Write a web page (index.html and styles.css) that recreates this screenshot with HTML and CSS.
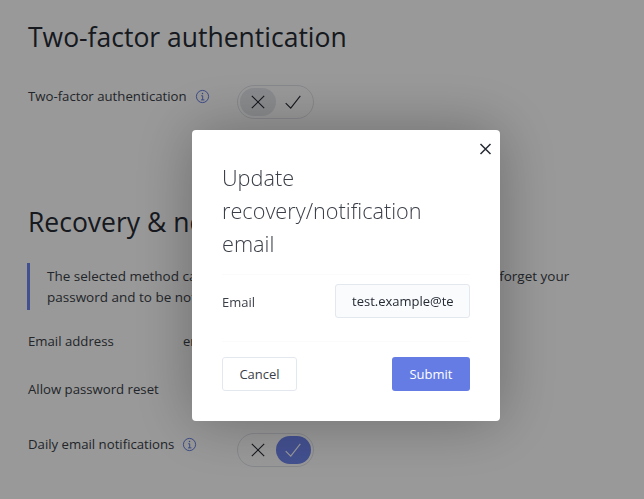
FILE: index.html
```html
<!DOCTYPE html>
<html lang="en">
<head>
  <meta charset="UTF-8" />
  <title>Account settings</title>
  <link rel="stylesheet" href="styles.css">
</head>
<body>
  <div class="page">
    <h2 class="first">Two-factor authentication</h2>
    <div class="row row-2fa">
      <div class="label">Two-factor authentication
        <svg class="info" viewBox="0 0 16 16"><circle cx="8" cy="8" r="6.5"/><path d="M6.6 7.2H8.2V11.6M6.4 11.6H10"/><circle class="dot" cx="8" cy="4.9" r="0.8"/></svg>
      </div>
      <div class="toggle">
        <span class="opt off-on"><svg viewBox="0 0 16 16"><path d="M2.5 2.5L13.5 13.5M13.5 2.5L2.5 13.5"/></svg></span>
        <span class="opt"><svg viewBox="0 0 16 16"><path d="M1.5 9L6 13.5L14.5 2.5"/></svg></span>
      </div>
    </div>

    <h2 class="second">Recovery &amp; notifications</h2>
    <div class="note">The selected method can be used to recover your password in case you forget your password and to be notified of important account activity.</div>
    <div class="row row-email">
      <div class="label wide">Email address</div>
      <div class="value">email@example.com</div>
    </div>
    <div class="row row-reset">
      <div class="label">Allow password reset</div>
    </div>
    <div class="row row-daily">
      <div class="label">Daily email notifications
        <svg class="info" viewBox="0 0 16 16"><circle cx="8" cy="8" r="6.5"/><path d="M6.6 7.2H8.2V11.6M6.4 11.6H10"/><circle class="dot" cx="8" cy="4.9" r="0.8"/></svg>
      </div>
      <div class="toggle">
        <span class="opt"><svg viewBox="0 0 16 16"><path d="M2.5 2.5L13.5 13.5M13.5 2.5L2.5 13.5"/></svg></span>
        <span class="opt on"><svg viewBox="0 0 16 16"><path d="M1.5 9L6 13.5L14.5 2.5"/></svg></span>
      </div>
    </div>
  </div>

  <div class="overlay"></div>

  <div class="modal">
    <button class="close" aria-label="Close"><svg viewBox="0 0 12 12"><path d="M1 1L11 11M11 1L1 11"/></svg></button>
    <h3>Update recovery/notification email</h3>
    <div class="modal-field">
      <label for="email">Email</label>
      <input type="text" id="email" value="test.example@test.com" />
    </div>
    <div class="modal-foot">
      <button class="btn">Cancel</button>
      <button class="btn primary">Submit</button>
    </div>
  </div>
</body>
</html>
```

FILE: styles.css
```css
html, body {
  margin: 0;
  height: 100%;
  overflow: hidden;
}
body {
  font-family: 'Open Sans', 'Noto Sans', sans-serif;
  background: #fff;
  color: #262a33;
}
.page {
  padding: 0 0 0 28px;
}
h2 {
  font-size: 26.5px;
  font-weight: 400;
  line-height: 36px;
  margin: 0;
}
h2.first {
  padding-top: 19px;
}
h2.second {
  margin-top: 85px;
}
.row {
  display: flex;
  align-items: flex-start;
}
.row-2fa {
  margin-top: 29px;
}
.label {
  font-size: 13.2px;
  line-height: 24px;
  width: 209px;
  flex: none;
  color: #3a3e47;
  display: flex;
  align-items: center;
  gap: 8px;
}
.label.wide {
  width: 155px;
}
.info {
  width: 15px;
  height: 15px;
  fill: none;
  stroke: #5a74de;
  stroke-width: 1;
  flex: none;
}
.info .dot {
  fill: #5a74de;
  stroke: none;
}
.toggle {
  display: flex;
  width: 77px;
  height: 34px;
  margin-top: 1px;
  border: 1px solid #dfe3ea;
  border-radius: 17px;
  box-sizing: border-box;
  padding: 2px;
  justify-content: space-between;
}
.opt {
  width: 37px;
  border-radius: 14px;
  display: flex;
  align-items: center;
  justify-content: center;
}
.opt svg {
  width: 18px;
  height: 18px;
  fill: none;
  stroke: #262a33;
  stroke-width: 1;
}
.off-on {
  background: #e6e8ec;
}
.on {
  background: #6f86f0;
}
.on svg {
  stroke: #fff;
}
.note {
  margin: 23px 0 0 -1px;
  border-left: 3px solid #6f86f0;
  padding: 3px 70px 2px 17px;
  font-size: 13.5px;
  line-height: 21px;
  color: #3a3e47;
}
.row-email {
  margin-top: 19px;
}
.value {
  font-size: 13px;
  line-height: 24px;
  color: #3a3e47;
}
.row-reset {
  margin-top: 24px;
}
.row-daily {
  margin-top: 31px;
}

.overlay {
  position: fixed;
  inset: 0;
  background: rgba(0, 0, 0, 0.4);
}
.modal {
  position: fixed;
  left: 192px;
  top: 130px;
  width: 308px;
  height: 291px;
  box-sizing: border-box;
  background: #fff;
  border-radius: 4px;
  padding: 31px 30px 0;
  box-shadow: 0 0 60px rgba(0, 0, 0, 0.3);
}
.close {
  position: absolute;
  top: 13px;
  right: 8px;
  width: 13px;
  height: 12px;
  padding: 0;
  border: none;
  background: none;
  box-sizing: content-box;
}
.close svg {
  display: block;
  width: 13px;
  height: 12px;
  fill: none;
  stroke: #262a33;
  stroke-width: 1.5;
}
h3 {
  font-size: 21.7px;
  font-weight: 300;
  line-height: 33px;
  margin: 0;
  color: #3a3e47;
}
.modal-field {
  margin-top: 14px;
  border-top: 1px solid #fbfbfc;
  border-bottom: 1px solid #fbfbfc;
  height: 66px;
  display: flex;
  align-items: flex-start;
  justify-content: space-between;
}
.modal-field label {
  font-size: 13px;
  line-height: 34px;
  margin-top: 10px;
  color: #3a3e47;
}
.modal-field input {
  width: 135px;
  height: 34px;
  margin-top: 9px;
  box-sizing: border-box;
  padding: 0 16px;
  border: 1px solid #e3e8ef;
  border-radius: 3px;
  background: #f9fbfd;
  font: 13px 'Open Sans', sans-serif;
  color: #262a33;
}
.modal-foot {
  margin-top: 15px;
  display: flex;
  justify-content: space-between;
}
.btn {
  width: 75px;
  height: 34px;
  padding: 0;
  border: 1px solid #e3e8ef;
  border-radius: 3px;
  background: #fff;
  font: 13px 'Open Sans', sans-serif;
  color: #3a3e47;
}
.btn.primary {
  width: 78px;
  border: none;
  background: #657ce4;
  color: #fff;
  font-weight: 500;
}
```
